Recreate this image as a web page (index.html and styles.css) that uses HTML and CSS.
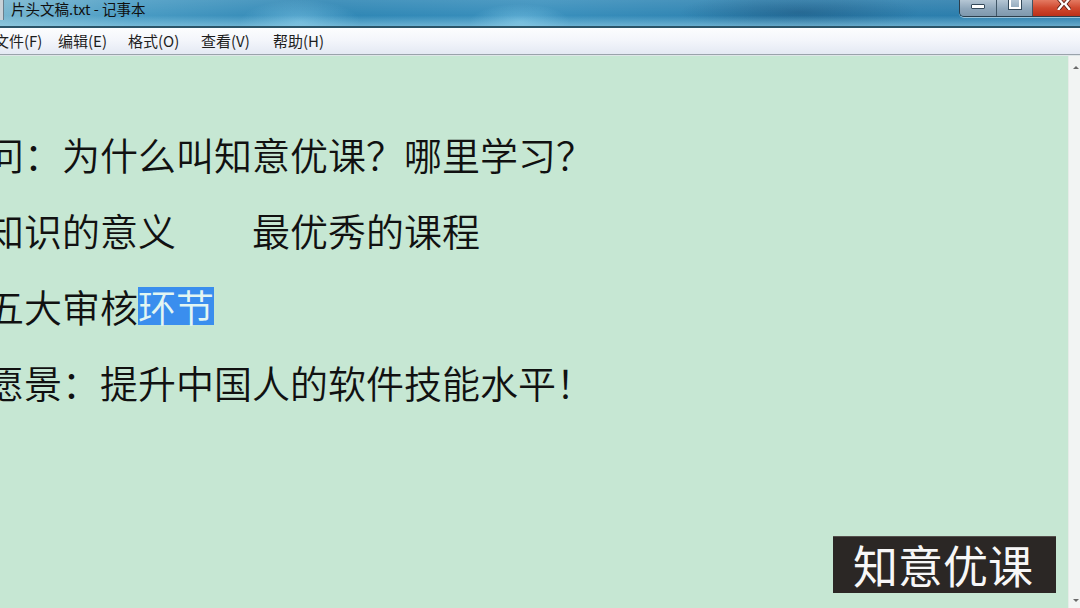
FILE: index.html
```html
<!DOCTYPE html>
<html lang="zh-CN">
<head>
<meta charset="utf-8">
<title>片头文稿.txt - 记事本</title>
<link rel="stylesheet" href="styles.css">
</head>
<body>
<div class="window">
  <div class="titlebar">
    <span class="app-icon"></span>
    <span class="title">片头文稿.txt - 记事本</span>
    <div class="caption">
      <span class="cbtn min"><i class="min-glyph"></i></span>
      <span class="cbtn max"><i class="max-glyph"></i></span>
      <span class="cbtn close">
        <svg class="close-glyph" width="14" height="10" viewBox="0 0 14 10">
          <path d="M1 -2 L6 4 L1 10 M13 -2 L8 4 L13 10" stroke="#5a1a10" stroke-width="4" fill="none"/>
          <path d="M1 -2 L6 4 L1 10 M13 -2 L8 4 L13 10" stroke="#ffffff" stroke-width="2.4" fill="none"/>
        </svg>
      </span>
    </div>
  </div>
  <nav class="menubar">
    <span class="menu-item">文件(F)</span>
    <span class="menu-item">编辑(E)</span>
    <span class="menu-item">格式(O)</span>
    <span class="menu-item">查看(V)</span>
    <span class="menu-item">帮助(H)</span>
  </nav>
  <div class="client">
    <div class="editor">
      <p class="line">问：为什么叫知意优课？哪里学习？</p>
      <p class="line">知识的意义　　最优秀的课程</p>
      <p class="line">五大审核<span class="selected">环节</span></p>
      <p class="line">愿景：提升中国人的软件技能水平！</p>
    </div>
    <div class="vscroll">
      <span class="arrow up"></span>
      <span class="arrow down"></span>
    </div>
  </div>
  <div class="logo">知意优课</div>
</div>
</body>
</html>
```
FILE: styles.css
```css
html, body {
  margin: 0;
  padding: 0;
  width: 1080px;
  height: 608px;
  overflow: hidden;
  background: #c6e7d3;
}

.window {
  position: relative;
  display: flex;
  flex-direction: column;
  width: 1080px;
  height: 608px;
  font-family: "Noto Sans CJK SC", "Noto Sans", sans-serif;
}

/* ---------- title bar ---------- */
.titlebar {
  display: flex;
  align-items: flex-start;
  height: 26px;
  border-bottom: 2px solid #2b5468;
  background:
    linear-gradient(to bottom, rgba(255,255,255,0.10) 0%, rgba(255,255,255,0) 60%, rgba(160,215,235,0.35) 88%, rgba(160,215,235,0.5) 100%),
    radial-gradient(ellipse 60px 22px at 300px 22px, rgba(140,210,240,0.55), rgba(140,210,240,0) 100%),
    radial-gradient(ellipse 50px 18px at 520px 22px, rgba(140,210,240,0.55), rgba(140,210,240,0) 100%),
    radial-gradient(ellipse 120px 20px at 800px 12px, rgba(20,70,110,0.45), rgba(20,70,110,0) 100%),
    linear-gradient(to right, #79b6cf 0%, #4a9cc4 12%, #2f86b4 30%, #3a90bd 50%, #2e82b0 70%, #2b7cab 100%);
}

.app-icon {
  width: 3px;
  height: 20px;
  background: #c9d2d8;
  border-right: 1px solid #6a7f8c;
}

.title {
  margin-left: 7px;
  font-size: 14.5px;
  line-height: 18px;
  color: #101010;
}

.caption {
  display: flex;
  margin-left: auto;
  margin-right: 0;
  height: 16px;
  border: 1px solid #2c3e4c;
  border-top: none;
  border-right: none;
  border-bottom-left-radius: 5px;
  overflow: hidden;
  box-shadow: 0 1px 0 rgba(255,255,255,0.5);
}

.cbtn {
  position: relative;
  display: flex;
  align-items: flex-start;
  justify-content: center;
  height: 16px;
}

.cbtn.min {
  width: 36px;
  background: linear-gradient(#b5c6d4, #8ea6ba 55%, #7f98ad);
  border-right: 1px solid #3f5566;
}

.cbtn.max {
  width: 35px;
  background: linear-gradient(#b5c6d4, #8ea6ba 55%, #7f98ad);
  border-right: 1px solid #3f5566;
}

.cbtn.close {
  width: 47px;
  justify-content: flex-start;
  background: linear-gradient(#e47a62, #d0492f 50%, #bb3019);
}

.min-glyph {
  display: block;
  margin-top: 4px;
  width: 12px;
  height: 3px;
  background: #ffffff;
  border: 1px solid #34495a;
  border-radius: 1px;
}

.max-glyph {
  display: block;
  margin-top: -2px;
  width: 8px;
  height: 7px;
  border: 2px solid #ffffff;
  outline: 1px solid #34495a;
}

.close-glyph {
  display: block;
  margin-left: 24px;
}

/* ---------- menu bar ---------- */
.menubar {
  display: grid;
  grid-template-columns: 64px 70px 73px 72px auto;
  align-items: center;
  height: 26px;
  margin-left: -6px;
  border-bottom: 1px solid #9aa3ab;
  box-shadow: 0 1px 0 #dfe6e8;
  background: linear-gradient(to bottom, #fcfdfe 0%, #f4f6fb 45%, #e4e9f3 100%);
}

.menu-item {
  font-size: 15px;
  line-height: 26px;
  color: #1e1e1e;
  white-space: nowrap;
}

/* ---------- client area ---------- */
.client {
  display: flex;
  flex: 1;
  min-height: 0;
  margin-top: 1px;
}

.editor {
  flex: 1;
  overflow: hidden;
  padding-top: 79px;
  background: #c6e7d3;
}

.line {
  margin: 0 0 38px -14px;
  font-size: 38px;
  line-height: 38px;
  height: 38px;
  white-space: pre;
  color: #111111;
  font-weight: 350;
}

.selected {
  display: inline-block;
  height: 38px;
  line-height: 38px;
  vertical-align: top;
  background: #3a8eee;
  color: #e2f6f2;
}

.vscroll {
  position: relative;
  width: 11px;
  border-left: 1px solid #e6ece8;
  background: #f2f4f3;
}

.arrow {
  position: absolute;
  left: 4px;
  width: 0;
  height: 0;
  border-left: 3px solid transparent;
  border-right: 3px solid transparent;
}

.arrow.up {
  top: 10px;
  border-bottom: 3px solid #6a6a6a;
}

.arrow.down {
  bottom: 6px;
  border-top: 3px solid #6a6a6a;
}

/* ---------- watermark logo ---------- */
.logo {
  position: absolute;
  right: 24px;
  bottom: 15px;
  width: 180px;
  height: 56px;
  padding: 0 23px 0 20px;
  background: #2b2725;
  border-top: 1px solid #55504c;
  box-sizing: content-box;
  color: #f7f7f7;
  font-size: 45px;
  line-height: 56px;
  white-space: nowrap;
}
```
